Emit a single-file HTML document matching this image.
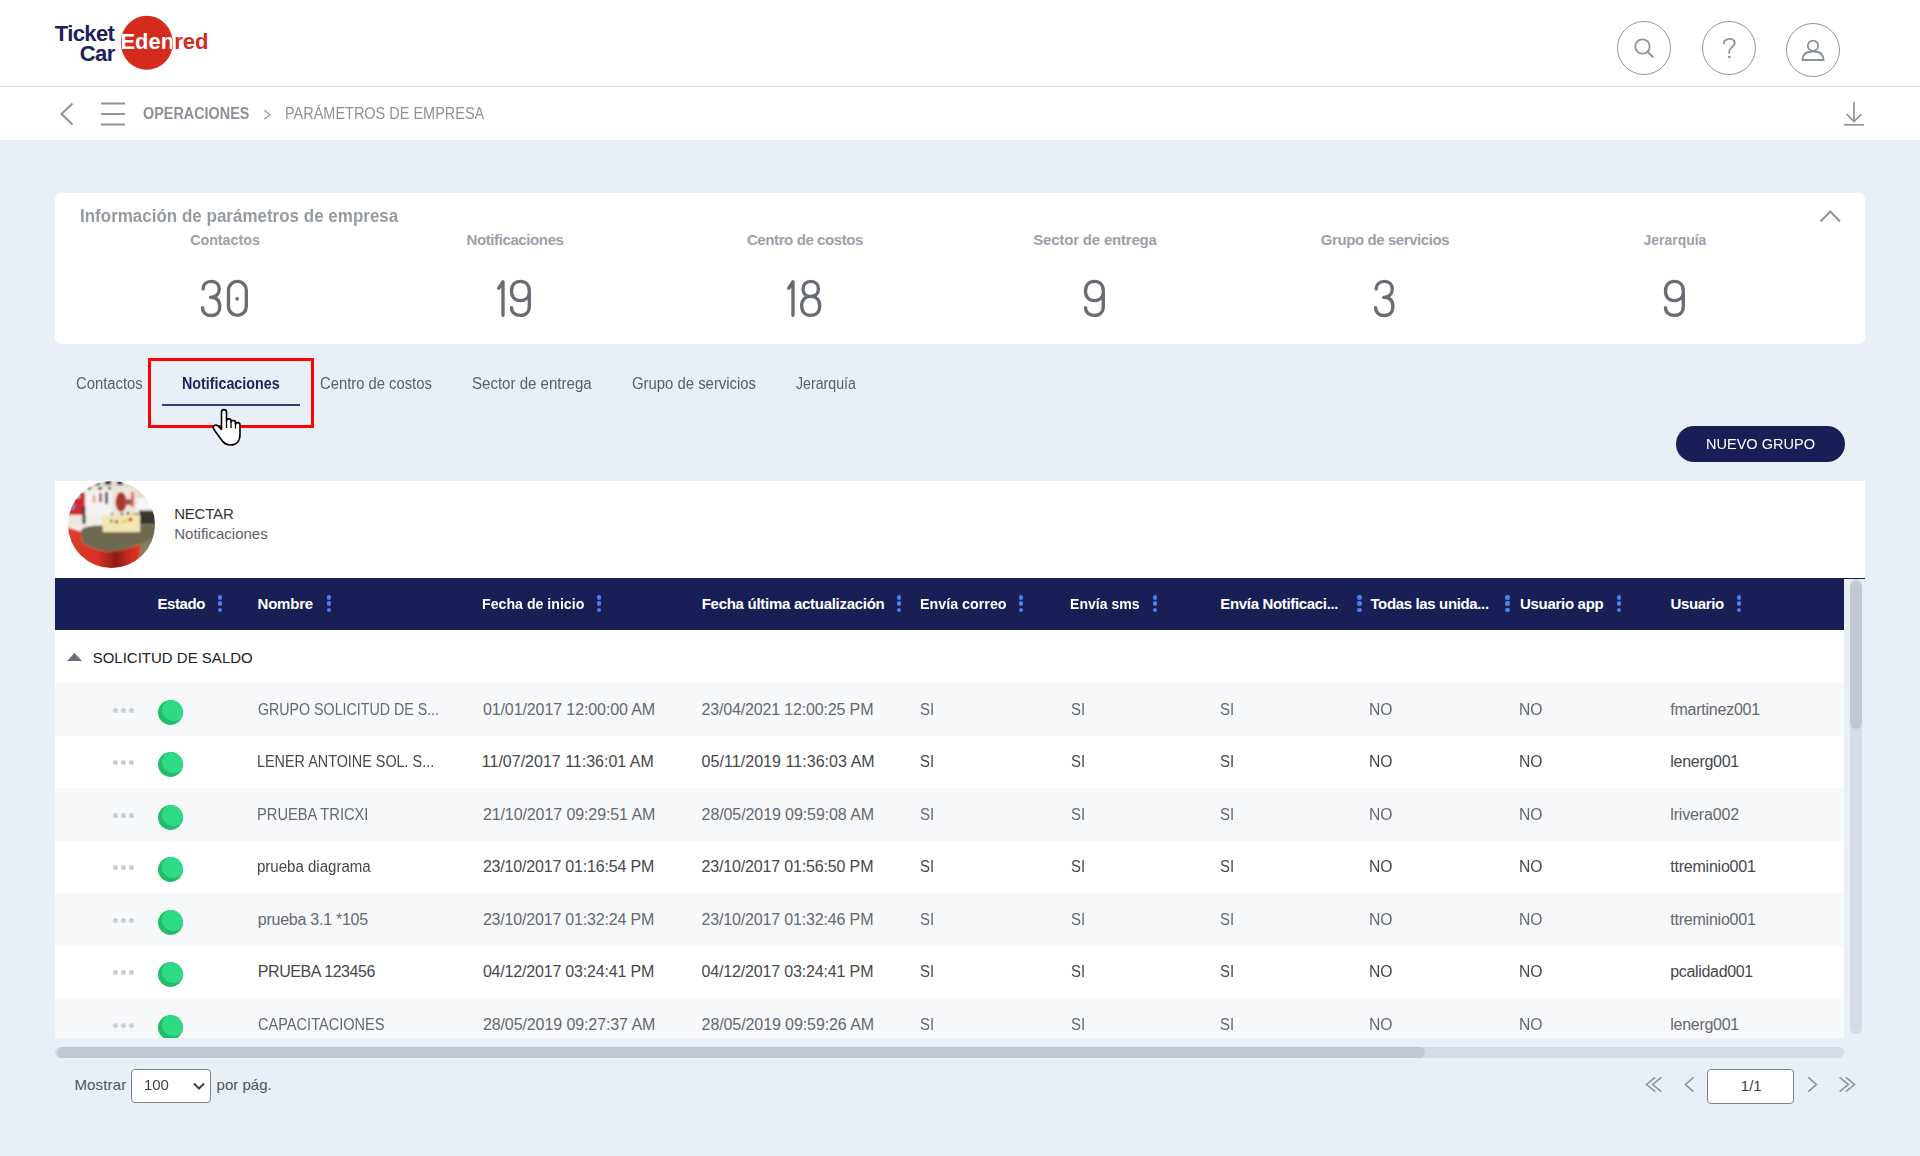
<!DOCTYPE html>
<html><head><meta charset="utf-8">
<style>
*{margin:0;padding:0;box-sizing:border-box}
html,body{width:1920px;height:1156px;overflow:hidden;background:#e9eff7;font-family:"Liberation Sans",sans-serif;position:relative}
.a{position:absolute}
.t{position:absolute;white-space:nowrap;line-height:1}
.circ{position:absolute;width:54px;height:54px;border:1px solid #8e939b;border-radius:50%}
.r{position:absolute;left:55px;width:1789px;height:53px}
.dots{position:absolute;left:113px;width:22px;height:5px}
.dots i{position:absolute;top:0;width:5px;height:5px;border-radius:50%;background:#c9cdd5}
.dots i:nth-child(1){left:0}.dots i:nth-child(2){left:8px}.dots i:nth-child(3){left:16px}
.gc{position:absolute;left:158px;width:25px;height:25px;border-radius:50%;background:#23bd6a;overflow:hidden}
.gc:after{content:"";position:absolute;left:4px;top:-1px;width:23px;height:22px;border-radius:50%;background:#2edb84}
.hd{position:absolute;top:595px;width:5px;height:17px}
.hd i{position:absolute;left:0;width:4.6px;height:4.6px;border-radius:50%;background:#4f80f2}
.hd i:nth-child(1){top:0}.hd i:nth-child(2){top:6.3px}.hd i:nth-child(3){top:12.6px}
</style></head><body>
<div class="a" style="left:0;top:0;width:1920px;height:86px;background:#fff"></div>
<div class="a" style="left:0;top:86px;width:1920px;height:1px;background:#dcdee2"></div>
<div class="a" style="left:0;top:87px;width:1920px;height:53px;background:#fff"></div>

<svg class="a" style="left:50px;top:10px" width="170" height="66" viewBox="50 10 170 66">
  <text x="114.3" y="41.4" text-anchor="end" font-family="Liberation Sans" font-weight="bold" font-size="22" fill="#1b2159" letter-spacing="-0.6">Ticket</text>
  <text x="114.6" y="60.5" text-anchor="end" font-family="Liberation Sans" font-weight="bold" font-size="22" fill="#1b2159" letter-spacing="-0.6">Car</text>
  <defs><clipPath id="cc"><ellipse cx="146.8" cy="42.8" rx="26" ry="27"/></clipPath></defs>
  <ellipse cx="146.8" cy="42.8" rx="26" ry="27" fill="#d52b1e"/>
  <text x="120.4" y="49.4" font-family="Liberation Sans" font-weight="bold" font-size="22" fill="#d52b1e" letter-spacing="0">Edenred</text>
  <text x="120.4" y="49.4" font-family="Liberation Sans" font-weight="bold" font-size="22" fill="#fff" letter-spacing="0" clip-path="url(#cc)">Edenred</text>
</svg>

<div class="circ" style="left:1617px;top:21px"></div>
<div class="circ" style="left:1702px;top:21px"></div>
<div class="circ" style="left:1786px;top:23px"></div>
<svg class="a" style="left:1600px;top:20px" width="260" height="60" viewBox="1600 20 260 60">
  <g fill="none" stroke="#8e939b" stroke-width="1.8" stroke-linecap="round">
    <circle cx="1642.5" cy="46.5" r="7.2"/>
    <line x1="1647.8" y1="52" x2="1653" y2="57"/>
    <path d="M1723.8,43.5 C1723.8,39 1732,37 1734.5,41.5 C1736.5,46 1729.5,47 1729.3,51.5 L1729.3,53"/>
    <circle cx="1813" cy="45.8" r="5.2"/>
    <path d="M1802.5,60 C1802.5,53 1808,51.5 1813,51.5 C1818,51.5 1823.5,53 1823.5,60 Z"/>
  </g>
  <circle cx="1729.3" cy="57" r="1.3" fill="#8e939b"/>
</svg>
<svg class="a" style="left:1835px;top:95px" width="40" height="40" viewBox="1835 95 40 40">
  <g fill="none" stroke="#8e939b" stroke-width="1.7">
    <line x1="1854" y1="102" x2="1854" y2="120.5"/>
    <polyline points="1846.5,114 1854,121.5 1861.5,114"/>
    <line x1="1844" y1="124.8" x2="1864" y2="124.8"/>
  </g>
</svg>

<svg class="a" style="left:55px;top:98px" width="230" height="32" viewBox="55 98 230 32">
  <polyline points="72.5,103.5 61.5,114 72.5,124.5" fill="none" stroke="#8e939b" stroke-width="2"/>
  <line x1="101" y1="103.5" x2="125" y2="103.5" stroke="#8e939b" stroke-width="2"/>
  <line x1="101" y1="114" x2="125" y2="114" stroke="#8e939b" stroke-width="2"/>
  <line x1="101" y1="124.5" x2="125" y2="124.5" stroke="#8e939b" stroke-width="2"/>
  <polyline points="264.3,110.3 269.9,114.8 264.3,119.3" fill="none" stroke="#969ba3" stroke-width="1.3"/>
</svg>

<div class="a" style="left:55px;top:193px;width:1810px;height:151px;background:#fff;border-radius:6px"></div>
<svg class="a" style="left:1815px;top:205px" width="30" height="22" viewBox="1815 205 30 22">
  <polyline points="1820.5,221.5 1830.3,211.5 1840,221.5" fill="none" stroke="#8e939b" stroke-width="2"/>
</svg>
<svg class="a" style="left:180px;top:270px" width="1530" height="55" viewBox="180 270 1530 55"><g fill="none" stroke="#686c75" stroke-width="3.35" stroke-linecap="round" stroke-linejoin="round">
<path transform="translate(200.9,280)" d="M2.2,9 C2.2,4.5 5.5,1.4 10.5,1.4 C15.5,1.4 18.3,4.8 18.3,9.3 C18.3,14 15,17.3 10,17.3 L9.6,17.3 M10,17.3 C16,17.3 18.9,20.5 18.9,26.5 C18.9,32 15.8,35.5 10.5,35.5 C5,35.5 1.6,32.5 1.6,27.6"/>
<path transform="translate(226.9,280)" d="M1.6,10.3 A8.9,8.9 0 0 1 19.4,10.3 L19.4,26.5 A8.9,8.9 0 0 1 1.6,26.5 Z"/>
<path transform="translate(496.1,280)" d="M2.6,8.2 L6.9,1.8 L6.9,35.2"/>
<path transform="translate(510,280)" d="M19.3,11 C19.3,4.8 15.8,1.4 10.4,1.4 C5,1.4 1.5,4.8 1.5,11 C1.5,17.2 5,20.6 10.4,20.6 C15.5,20.6 19.3,17.5 19.3,12 L19.3,26.2 C19.3,32 15.8,35.4 10.4,35.4 C5,35.4 1.5,32.3 1.5,27.6"/>
<path transform="translate(786.1,280)" d="M2.6,8.2 L6.9,1.8 L6.9,35.2"/>
<path transform="translate(800.2,280)" d="M10.5,16.4 C5.5,16.4 2.8,13.5 2.8,9 C2.8,4.3 5.8,1.4 10.5,1.4 C15.2,1.4 18.2,4.3 18.2,9 C18.2,13.5 15.5,16.4 10.5,16.4 C4.8,16.4 1.5,19.8 1.5,26 C1.5,32 5,35.4 10.5,35.4 C16,35.4 19.5,32 19.5,26 C19.5,19.8 16.2,16.4 10.5,16.4 Z"/>
<path transform="translate(1084,280)" d="M19.3,11 C19.3,4.8 15.8,1.4 10.4,1.4 C5,1.4 1.5,4.8 1.5,11 C1.5,17.2 5,20.6 10.4,20.6 C15.5,20.6 19.3,17.5 19.3,12 L19.3,26.2 C19.3,32 15.8,35.4 10.4,35.4 C5,35.4 1.5,32.3 1.5,27.6"/>
<path transform="translate(1374,280)" d="M2.2,9 C2.2,4.5 5.5,1.4 10.5,1.4 C15.5,1.4 18.3,4.8 18.3,9.3 C18.3,14 15,17.3 10,17.3 L9.6,17.3 M10,17.3 C16,17.3 18.9,20.5 18.9,26.5 C18.9,32 15.8,35.5 10.5,35.5 C5,35.5 1.6,32.5 1.6,27.6"/>
<path transform="translate(1664,280)" d="M19.3,11 C19.3,4.8 15.8,1.4 10.4,1.4 C5,1.4 1.5,4.8 1.5,11 C1.5,17.2 5,20.6 10.4,20.6 C15.5,20.6 19.3,17.5 19.3,12 L19.3,26.2 C19.3,32 15.8,35.4 10.4,35.4 C5,35.4 1.5,32.3 1.5,27.6"/>
</g><circle cx="237.1" cy="298.8" r="1.9" fill="#686c75"/></svg>

<div class="a" style="left:162px;top:404px;width:138px;height:2px;background:#353b74"></div>
<div class="a" style="left:148px;top:358px;width:166px;height:70px;border:3px solid #ff0000"></div>

<div class="a" style="left:1676px;top:426px;width:169px;height:36px;border-radius:18px;background:#181e56"></div>

<div class="a" style="left:55px;top:481px;width:1810px;height:97px;background:#fff"></div>
<svg class="a" style="left:67.9px;top:481px" width="87" height="87" viewBox="0 0 87 87">
<defs><clipPath id="av"><circle cx="43.5" cy="43.5" r="43.5"/></clipPath><filter id="bl" x="-10%" y="-10%" width="120%" height="120%"><feGaussianBlur stdDeviation="0.9"/></filter><linearGradient id="rg" x1="0" y1="0" x2="87" y2="0" gradientUnits="userSpaceOnUse"><stop offset="0" stop-color="#e23c2c"/><stop offset="0.35" stop-color="#d63020"/><stop offset="0.55" stop-color="#8e1c14"/><stop offset="0.72" stop-color="#d02c1c"/><stop offset="0.85" stop-color="#e63424"/></linearGradient></defs>
<g clip-path="url(#av)"><g filter="url(#bl)">
<rect x="-5" y="-5" width="97" height="97" fill="#f1eee9"/>
<rect x="-5" y="-5" width="97" height="12" fill="#e4ddd2"/>
<rect x="27" y="-1" width="5" height="5" fill="#3a3a3a"/><rect x="37" y="-1" width="6" height="5" fill="#3a3a3a"/><rect x="49" y="-1" width="6" height="5" fill="#3a3a3a"/>
<rect x="20" y="6" width="3" height="4" fill="#555"/><rect x="30" y="6" width="4" height="4" fill="#555"/><rect x="40" y="6" width="3" height="4" fill="#555"/>
<rect x="66" y="-5" width="25" height="30" fill="#e8dcc8"/>
<polygon points="-5,14 10,11 17,12 17,34 -5,36" fill="#cf2b33"/>
<rect x="2" y="22" width="4" height="6" fill="#3aa0d8"/>
<rect x="8" y="14" width="4" height="3" fill="#9fc8e8"/>
<rect x="-5" y="34" width="20" height="11" fill="#efe6dc"/>
<rect x="14.5" y="25" width="3" height="18" fill="#3a3533"/>
<rect x="17.5" y="9" width="26" height="25" fill="#f4f3f1"/>
<rect x="31" y="12" width="3" height="9" fill="#b84050"/><rect x="37" y="11" width="3" height="12" fill="#3a4a78"/><rect x="25" y="14" width="2" height="8" fill="#c89040"/>
<rect x="44" y="8" width="24" height="28" fill="#ece6da"/>
<ellipse cx="53" cy="21" rx="5.5" ry="10" fill="#a8382c"/>
<rect x="57" y="18" width="6" height="6" fill="#b05048"/>
<rect x="63" y="11" width="3" height="15" fill="#d86060"/>
<rect x="69" y="17" width="18" height="13" fill="#f6f6f4"/>
<rect x="71" y="29.5" width="18" height="14" fill="#383632"/>
<rect x="34.8" y="34" width="37.2" height="17" fill="#f2e6b4"/>
<circle cx="44" cy="33" r="1.3" fill="#40a090"/><circle cx="54" cy="33" r="1.3" fill="#333"/><circle cx="60" cy="32.5" r="1.4" fill="#333"/><circle cx="65" cy="33" r="1.3" fill="#e0b020"/><circle cx="68.5" cy="33" r="1.3" fill="#c83030"/>
<circle cx="43.4" cy="40" r="1.6" fill="#2a9a80"/><circle cx="48.6" cy="40.8" r="1.8" fill="#d03838"/><circle cx="54.7" cy="40.8" r="1.8" fill="#f0d020"/><circle cx="58" cy="40" r="1.5" fill="#e8c820"/><circle cx="62.4" cy="38.5" r="2" fill="#c83030"/>
<path d="M12.7,50.4 C14,46.5 20,44.5 34.8,44.5 L34.8,51 L72,51 L72,43.4 L92,43.4 L92,92 L70,92 C72,80 72,68 72,63.3 C62,67 48,71 37.4,70.3 C28,69 18,65 14,60.7 Z" fill="#6d6a50"/>
<path d="M72,63.3 L92,55 L92,92 L66,92 Z" fill="#8a8058"/>
<path d="M-5,45 L12.7,50.4 L14,60.7 C18,65 28,69 37.4,70.3 C48,71 62,67 72,63.3 C73,72 70,84 66,92 L-5,92 Z" fill="url(#rg)"/>
<circle cx="11.4" cy="66" r="1" fill="#552"/><circle cx="14.9" cy="69" r="1" fill="#552"/>
</g></g></svg>

<div class="a" style="left:55px;top:578px;width:1810px;height:1px;background:#181e56"></div>
<div class="a" style="left:55px;top:578px;width:1789px;height:52px;background:#181e56"></div>
<div class="a" style="left:55px;top:630px;width:1789px;height:53px;background:#fff"></div>
<svg class="a" style="left:60px;top:645px" width="30" height="25" viewBox="60 645 30 25">
  <polygon points="67,661 74.5,653 82,661" fill="#6c7079"/>
</svg>
<div class="a" style="left:0;top:0;width:1844px;height:1038px;overflow:hidden">
<div class="r" style="top:683.0px;background:#f7f8fa"></div>
<div class="dots" style="top:707.6px"><i></i><i></i><i></i></div>
<div class="gc" style="top:700px"></div>
<div class="r" style="top:735.5px;background:#ffffff"></div>
<div class="dots" style="top:759.6px"><i></i><i></i><i></i></div>
<div class="gc" style="top:752px"></div>
<div class="r" style="top:788.0px;background:#f7f8fa"></div>
<div class="dots" style="top:812.6px"><i></i><i></i><i></i></div>
<div class="gc" style="top:805px"></div>
<div class="r" style="top:840.5px;background:#ffffff"></div>
<div class="dots" style="top:864.6px"><i></i><i></i><i></i></div>
<div class="gc" style="top:857px"></div>
<div class="r" style="top:893.0px;background:#f7f8fa"></div>
<div class="dots" style="top:917.6px"><i></i><i></i><i></i></div>
<div class="gc" style="top:910px"></div>
<div class="r" style="top:945.5px;background:#ffffff"></div>
<div class="dots" style="top:969.6px"><i></i><i></i><i></i></div>
<div class="gc" style="top:962px"></div>
<div class="r" style="top:998.0px;background:#f7f8fa"></div>
<div class="dots" style="top:1022.6px"><i></i><i></i><i></i></div>
<div class="gc" style="top:1015px"></div>
</div>
<div class="hd" style="left:217.7px"><i></i><i></i><i></i></div>
<div class="hd" style="left:326.7px"><i></i><i></i><i></i></div>
<div class="hd" style="left:596.7px"><i></i><i></i><i></i></div>
<div class="hd" style="left:896.7px"><i></i><i></i><i></i></div>
<div class="hd" style="left:1018.9px"><i></i><i></i><i></i></div>
<div class="hd" style="left:1152.7px"><i></i><i></i><i></i></div>
<div class="hd" style="left:1357.1px"><i></i><i></i><i></i></div>
<div class="hd" style="left:1505.2px"><i></i><i></i><i></i></div>
<div class="hd" style="left:1616.5px"><i></i><i></i><i></i></div>
<div class="hd" style="left:1736.5px"><i></i><i></i><i></i></div>

<div class="a" style="left:55px;top:1047px;width:1789px;height:11px;border-radius:6px;background:#d5dce6"></div>
<div class="a" style="left:57px;top:1047px;width:1368px;height:11px;border-radius:6px;background:#c2c8d3"></div>
<div class="a" style="left:1850px;top:579px;width:12px;height:455px;border-radius:6px;background:#d5dce6"></div>
<div class="a" style="left:1850px;top:582px;width:12px;height:147px;border-radius:6px;background:#c2c8d3"></div>

<div class="a" style="left:131px;top:1069px;width:80px;height:34px;border:1px solid #7d8189;border-radius:4px;background:#fff"></div>
<svg class="a" style="left:190px;top:1078px" width="18" height="16" viewBox="190 1078 18 16">
  <polyline points="194,1083.5 199,1088.5 204,1083.5" fill="none" stroke="#3d4046" stroke-width="2"/>
</svg>
<div class="a" style="left:1707px;top:1069px;width:86.5px;height:35px;border:1px solid #7d8189;border-radius:4px;background:#fff"></div>
<svg class="a" style="left:1640px;top:1072px" width="225" height="26" viewBox="1640 1072 225 26">
  <g fill="none" stroke="#8e939b" stroke-width="1.6">
    <polyline points="1655.2,1077.4 1646.5,1084.5 1655.2,1091.6"/>
    <polyline points="1661.4,1077.4 1652.7,1084.5 1661.4,1091.6"/>
    <polyline points="1693.5,1077.4 1685.5,1084.5 1693.5,1091.6"/>
    <polyline points="1808.3,1077.4 1816.3,1084.5 1808.3,1091.6"/>
    <polyline points="1839.6,1077.4 1848.3,1084.5 1839.6,1091.6"/>
    <polyline points="1845.8,1077.4 1854.5,1084.5 1845.8,1091.6"/>
  </g>
</svg>
<div class="t" id="t0" style="top:105.23px;font-size:16.5px;color:#8c9199;font-weight:bold;left:143.00px;transform-origin:0 50%;transform:scaleX(0.8722);">OPERACIONES</div>
<div class="t" id="t1" style="top:105.23px;font-size:16.5px;color:#8c9199;left:285.40px;transform-origin:0 50%;transform:scaleX(0.8773);">PARÁMETROS DE EMPRESA</div>
<div class="t" id="t2" style="top:207.16px;font-size:18px;color:#969ba3;font-weight:bold;left:80.40px;transform-origin:0 50%;transform:scaleX(0.9440);">Información de parámetros de empresa</div>
<div class="t" id="t3" style="top:232.10px;font-size:15px;color:#9ca1a9;font-weight:bold;left:225px;transform-origin:0 50%;transform:scaleX(0.9496) translateX(-50%);">Contactos</div>
<div class="t" id="t4" style="top:232.10px;font-size:15px;color:#9ca1a9;font-weight:bold;letter-spacing:-0.385px;left:515px;transform-origin:0 50%;transform:scaleX(1.0000) translateX(-50%);padding-left:-0.385px;">Notificaciones</div>
<div class="t" id="t5" style="top:232.10px;font-size:15px;color:#9ca1a9;font-weight:bold;letter-spacing:-0.400px;left:805px;transform-origin:0 50%;transform:scaleX(1.0000) translateX(-50%);padding-left:-0.400px;">Centro de costos</div>
<div class="t" id="t6" style="top:232.10px;font-size:15px;color:#9ca1a9;font-weight:bold;letter-spacing:-0.189px;left:1095px;transform-origin:0 50%;transform:scaleX(1.0000) translateX(-50%);padding-left:-0.189px;">Sector de entrega</div>
<div class="t" id="t7" style="top:232.10px;font-size:15px;color:#9ca1a9;font-weight:bold;letter-spacing:-0.412px;left:1385px;transform-origin:0 50%;transform:scaleX(1.0000) translateX(-50%);padding-left:-0.412px;">Grupo de servicios</div>
<div class="t" id="t8" style="top:232.10px;font-size:15px;color:#9ca1a9;font-weight:bold;left:1675px;transform-origin:0 50%;transform:scaleX(0.9291) translateX(-50%);">Jerarquía</div>
<div class="t" id="t9" style="top:376.46px;font-size:16px;color:#5a5e66;left:75.60px;transform-origin:0 50%;transform:scaleX(0.9250);">Contactos</div>
<div class="t" id="t10" style="top:376.46px;font-size:16px;color:#1b2159;font-weight:bold;left:182.00px;transform-origin:0 50%;transform:scaleX(0.8925);">Notificaciones</div>
<div class="t" id="t11" style="top:376.46px;font-size:16px;color:#5a5e66;left:320.40px;transform-origin:0 50%;transform:scaleX(0.9247);">Centro de costos</div>
<div class="t" id="t12" style="top:376.46px;font-size:16px;color:#5a5e66;left:472.30px;transform-origin:0 50%;transform:scaleX(0.9408);">Sector de entrega</div>
<div class="t" id="t13" style="top:376.46px;font-size:16px;color:#5a5e66;left:632.00px;transform-origin:0 50%;transform:scaleX(0.9300);">Grupo de servicios</div>
<div class="t" id="t14" style="top:376.46px;font-size:16px;color:#5a5e66;left:796.00px;transform-origin:0 50%;transform:scaleX(0.8852);">Jerarquía</div>
<div class="t" id="t15" style="top:436.30px;font-size:15px;color:#ffffff;left:1705.60px;transform-origin:0 50%;transform:scaleX(0.9684);">NUEVO GRUPO</div>
<div class="t" id="t16" style="top:506.40px;font-size:15px;color:#333333;letter-spacing:-0.200px;left:174.20px;">NECTAR</div>
<div class="t" id="t17" style="top:525.60px;font-size:15px;color:#5d6067;letter-spacing:0.012px;left:174.20px;">Notificaciones</div>
<div class="t" id="t18" style="top:596.30px;font-size:15px;color:#ffffff;font-weight:bold;letter-spacing:-0.400px;left:157.40px;">Estado</div>
<div class="t" id="t19" style="top:596.30px;font-size:15px;color:#ffffff;font-weight:bold;letter-spacing:-0.200px;left:257.50px;">Nombre</div>
<div class="t" id="t20" style="top:596.30px;font-size:15px;color:#ffffff;font-weight:bold;left:481.80px;transform-origin:0 50%;transform:scaleX(0.9444);">Fecha de inicio</div>
<div class="t" id="t21" style="top:596.30px;font-size:15px;color:#ffffff;font-weight:bold;letter-spacing:-0.280px;left:701.70px;">Fecha última actualización</div>
<div class="t" id="t22" style="top:596.30px;font-size:15px;color:#ffffff;font-weight:bold;left:920.40px;transform-origin:0 50%;transform:scaleX(0.9529);">Envía correo</div>
<div class="t" id="t23" style="top:596.30px;font-size:15px;color:#ffffff;font-weight:bold;left:1070.40px;transform-origin:0 50%;transform:scaleX(0.9377);">Envía sms</div>
<div class="t" id="t24" style="top:596.30px;font-size:15px;color:#ffffff;font-weight:bold;letter-spacing:-0.333px;left:1220.30px;">Envía Notificaci...</div>
<div class="t" id="t25" style="top:596.30px;font-size:15px;color:#ffffff;font-weight:bold;letter-spacing:-0.356px;left:1370.40px;">Todas las unida...</div>
<div class="t" id="t26" style="top:596.30px;font-size:15px;color:#ffffff;font-weight:bold;letter-spacing:-0.300px;left:1520.00px;">Usuario app</div>
<div class="t" id="t27" style="top:596.30px;font-size:15px;color:#ffffff;font-weight:bold;letter-spacing:-0.342px;left:1670.40px;">Usuario</div>
<div class="t" id="t28" style="top:650.30px;font-size:15px;color:#222222;left:92.70px;">SOLICITUD DE SALDO</div>
<div class="t" id="t29" style="top:701.66px;font-size:16px;color:#65686e;left:257.80px;transform-origin:0 50%;transform:scaleX(0.8891);">GRUPO SOLICITUD DE S...</div>
<div class="t" id="t30" style="top:701.66px;font-size:16px;color:#65686e;letter-spacing:-0.098px;left:482.90px;">01/01/2017 12:00:00 AM</div>
<div class="t" id="t31" style="top:701.66px;font-size:16px;color:#65686e;letter-spacing:-0.161px;left:701.60px;">23/04/2021 12:00:25 PM</div>
<div class="t" id="t32" style="top:701.66px;font-size:16px;color:#65686e;left:920.30px;transform-origin:0 50%;transform:scaleX(0.9331);">SI</div>
<div class="t" id="t33" style="top:701.66px;font-size:16px;color:#65686e;left:1070.60px;transform-origin:0 50%;transform:scaleX(0.9331);">SI</div>
<div class="t" id="t34" style="top:701.66px;font-size:16px;color:#65686e;left:1220.30px;transform-origin:0 50%;transform:scaleX(0.9331);">SI</div>
<div class="t" id="t35" style="top:701.66px;font-size:16px;color:#65686e;left:1369.00px;transform-origin:0 50%;transform:scaleX(0.9818);">NO</div>
<div class="t" id="t36" style="top:701.66px;font-size:16px;color:#65686e;left:1519.00px;transform-origin:0 50%;transform:scaleX(0.9818);">NO</div>
<div class="t" id="t37" style="top:701.66px;font-size:16px;color:#65686e;letter-spacing:-0.245px;left:1670.30px;">fmartinez001</div>
<div class="t" id="t38" style="top:754.16px;font-size:16px;color:#46484d;left:256.60px;transform-origin:0 50%;transform:scaleX(0.8989);">LENER ANTOINE SOL. S...</div>
<div class="t" id="t39" style="top:754.16px;font-size:16px;color:#46484d;letter-spacing:0.002px;left:481.80px;">11/07/2017 11:36:01 AM</div>
<div class="t" id="t40" style="top:754.16px;font-size:16px;color:#46484d;letter-spacing:0.052px;left:701.60px;">05/11/2019 11:36:03 AM</div>
<div class="t" id="t41" style="top:754.16px;font-size:16px;color:#46484d;left:920.30px;transform-origin:0 50%;transform:scaleX(0.9331);">SI</div>
<div class="t" id="t42" style="top:754.16px;font-size:16px;color:#46484d;left:1070.60px;transform-origin:0 50%;transform:scaleX(0.9331);">SI</div>
<div class="t" id="t43" style="top:754.16px;font-size:16px;color:#46484d;left:1220.30px;transform-origin:0 50%;transform:scaleX(0.9331);">SI</div>
<div class="t" id="t44" style="top:754.16px;font-size:16px;color:#46484d;left:1369.00px;transform-origin:0 50%;transform:scaleX(0.9819);">NO</div>
<div class="t" id="t45" style="top:754.16px;font-size:16px;color:#46484d;left:1519.00px;transform-origin:0 50%;transform:scaleX(0.9819);">NO</div>
<div class="t" id="t46" style="top:754.16px;font-size:16px;color:#46484d;letter-spacing:-0.291px;left:1670.30px;">lenerg001</div>
<div class="t" id="t47" style="top:806.66px;font-size:16px;color:#65686e;left:256.60px;transform-origin:0 50%;transform:scaleX(0.9168);">PRUEBA TRICXI</div>
<div class="t" id="t48" style="top:806.66px;font-size:16px;color:#65686e;letter-spacing:-0.094px;left:482.90px;">21/10/2017 09:29:51 AM</div>
<div class="t" id="t49" style="top:806.66px;font-size:16px;color:#65686e;letter-spacing:-0.091px;left:701.60px;">28/05/2019 09:59:08 AM</div>
<div class="t" id="t50" style="top:806.66px;font-size:16px;color:#65686e;left:920.30px;transform-origin:0 50%;transform:scaleX(0.9331);">SI</div>
<div class="t" id="t51" style="top:806.66px;font-size:16px;color:#65686e;left:1070.60px;transform-origin:0 50%;transform:scaleX(0.9331);">SI</div>
<div class="t" id="t52" style="top:806.66px;font-size:16px;color:#65686e;left:1220.30px;transform-origin:0 50%;transform:scaleX(0.9331);">SI</div>
<div class="t" id="t53" style="top:806.66px;font-size:16px;color:#65686e;left:1369.00px;transform-origin:0 50%;transform:scaleX(0.9818);">NO</div>
<div class="t" id="t54" style="top:806.66px;font-size:16px;color:#65686e;left:1519.00px;transform-origin:0 50%;transform:scaleX(0.9818);">NO</div>
<div class="t" id="t55" style="top:806.66px;font-size:16px;color:#65686e;letter-spacing:-0.164px;left:1670.30px;">lrivera002</div>
<div class="t" id="t56" style="top:859.16px;font-size:16px;color:#46484d;left:256.60px;transform-origin:0 50%;transform:scaleX(0.9400);">prueba diagrama</div>
<div class="t" id="t57" style="top:859.16px;font-size:16px;color:#46484d;letter-spacing:-0.187px;left:482.90px;">23/10/2017 01:16:54 PM</div>
<div class="t" id="t58" style="top:859.16px;font-size:16px;color:#46484d;letter-spacing:-0.161px;left:701.60px;">23/10/2017 01:56:50 PM</div>
<div class="t" id="t59" style="top:859.16px;font-size:16px;color:#46484d;left:920.30px;transform-origin:0 50%;transform:scaleX(0.9331);">SI</div>
<div class="t" id="t60" style="top:859.16px;font-size:16px;color:#46484d;left:1070.60px;transform-origin:0 50%;transform:scaleX(0.9331);">SI</div>
<div class="t" id="t61" style="top:859.16px;font-size:16px;color:#46484d;left:1220.30px;transform-origin:0 50%;transform:scaleX(0.9331);">SI</div>
<div class="t" id="t62" style="top:859.16px;font-size:16px;color:#46484d;left:1369.00px;transform-origin:0 50%;transform:scaleX(0.9819);">NO</div>
<div class="t" id="t63" style="top:859.16px;font-size:16px;color:#46484d;left:1519.00px;transform-origin:0 50%;transform:scaleX(0.9819);">NO</div>
<div class="t" id="t64" style="top:859.16px;font-size:16px;color:#46484d;letter-spacing:-0.230px;left:1670.30px;">ttreminio001</div>
<div class="t" id="t65" style="top:911.66px;font-size:16px;color:#65686e;letter-spacing:-0.253px;left:257.80px;">prueba 3.1 *105</div>
<div class="t" id="t66" style="top:911.66px;font-size:16px;color:#65686e;letter-spacing:-0.187px;left:482.90px;">23/10/2017 01:32:24 PM</div>
<div class="t" id="t67" style="top:911.66px;font-size:16px;color:#65686e;letter-spacing:-0.161px;left:701.60px;">23/10/2017 01:32:46 PM</div>
<div class="t" id="t68" style="top:911.66px;font-size:16px;color:#65686e;left:920.30px;transform-origin:0 50%;transform:scaleX(0.9331);">SI</div>
<div class="t" id="t69" style="top:911.66px;font-size:16px;color:#65686e;left:1070.60px;transform-origin:0 50%;transform:scaleX(0.9331);">SI</div>
<div class="t" id="t70" style="top:911.66px;font-size:16px;color:#65686e;left:1220.30px;transform-origin:0 50%;transform:scaleX(0.9331);">SI</div>
<div class="t" id="t71" style="top:911.66px;font-size:16px;color:#65686e;left:1369.00px;transform-origin:0 50%;transform:scaleX(0.9818);">NO</div>
<div class="t" id="t72" style="top:911.66px;font-size:16px;color:#65686e;left:1519.00px;transform-origin:0 50%;transform:scaleX(0.9818);">NO</div>
<div class="t" id="t73" style="top:911.66px;font-size:16px;color:#65686e;letter-spacing:-0.230px;left:1670.30px;">ttreminio001</div>
<div class="t" id="t74" style="top:964.16px;font-size:16px;color:#46484d;letter-spacing:-0.427px;left:257.80px;">PRUEBA 123456</div>
<div class="t" id="t75" style="top:964.16px;font-size:16px;color:#46484d;letter-spacing:-0.187px;left:482.90px;">04/12/2017 03:24:41 PM</div>
<div class="t" id="t76" style="top:964.16px;font-size:16px;color:#46484d;letter-spacing:-0.161px;left:701.60px;">04/12/2017 03:24:41 PM</div>
<div class="t" id="t77" style="top:964.16px;font-size:16px;color:#46484d;left:920.30px;transform-origin:0 50%;transform:scaleX(0.9331);">SI</div>
<div class="t" id="t78" style="top:964.16px;font-size:16px;color:#46484d;left:1070.60px;transform-origin:0 50%;transform:scaleX(0.9331);">SI</div>
<div class="t" id="t79" style="top:964.16px;font-size:16px;color:#46484d;left:1220.30px;transform-origin:0 50%;transform:scaleX(0.9331);">SI</div>
<div class="t" id="t80" style="top:964.16px;font-size:16px;color:#46484d;left:1369.00px;transform-origin:0 50%;transform:scaleX(0.9819);">NO</div>
<div class="t" id="t81" style="top:964.16px;font-size:16px;color:#46484d;left:1519.00px;transform-origin:0 50%;transform:scaleX(0.9819);">NO</div>
<div class="t" id="t82" style="top:964.16px;font-size:16px;color:#46484d;letter-spacing:-0.337px;left:1670.30px;">pcalidad001</div>
<div class="t" id="t83" style="top:1016.66px;font-size:16px;color:#65686e;left:257.80px;transform-origin:0 50%;transform:scaleX(0.9104);">CAPACITACIONES</div>
<div class="t" id="t84" style="top:1016.66px;font-size:16px;color:#65686e;letter-spacing:-0.094px;left:482.90px;">28/05/2019 09:27:37 AM</div>
<div class="t" id="t85" style="top:1016.66px;font-size:16px;color:#65686e;letter-spacing:-0.091px;left:701.60px;">28/05/2019 09:59:26 AM</div>
<div class="t" id="t86" style="top:1016.66px;font-size:16px;color:#65686e;left:920.30px;transform-origin:0 50%;transform:scaleX(0.9331);">SI</div>
<div class="t" id="t87" style="top:1016.66px;font-size:16px;color:#65686e;left:1070.60px;transform-origin:0 50%;transform:scaleX(0.9331);">SI</div>
<div class="t" id="t88" style="top:1016.66px;font-size:16px;color:#65686e;left:1220.30px;transform-origin:0 50%;transform:scaleX(0.9331);">SI</div>
<div class="t" id="t89" style="top:1016.66px;font-size:16px;color:#65686e;left:1369.00px;transform-origin:0 50%;transform:scaleX(0.9818);">NO</div>
<div class="t" id="t90" style="top:1016.66px;font-size:16px;color:#65686e;left:1519.00px;transform-origin:0 50%;transform:scaleX(0.9818);">NO</div>
<div class="t" id="t91" style="top:1016.66px;font-size:16px;color:#65686e;letter-spacing:-0.291px;left:1670.30px;">lenerg001</div>
<div class="t" id="t92" style="top:1077.30px;font-size:15px;color:#4f5359;letter-spacing:0.160px;left:74.40px;">Mostrar</div>
<div class="t" id="t93" style="top:1077.30px;font-size:15px;color:#3d4046;left:144.40px;transform-origin:0 50%;transform:scaleX(0.9959);">100</div>
<div class="t" id="t94" style="top:1077.30px;font-size:15px;color:#4f5359;left:216.60px;">por pág.</div>
<div class="t" id="t95" style="top:1077.80px;font-size:15px;color:#3d4046;left:1740.80px;">1/1</div>
<svg class="a" style="left:208px;top:404px" width="40" height="44" viewBox="-4 -4 40 44">
<path d="M9.5,4 C9.5,0.8 14.5,0.8 14.5,4 L14.5,12.5 C15,10.3 19,10.3 19,12.8 L19,14 C19.5,12 23.5,12 23.5,14.5 L23.5,16 C24,14 28,14 28,16.8 L28,26.5 C28,33 24.5,37 18.5,37 C13.5,37 11.2,34.5 9.2,31.5 L1.8,21.2 C0,18.6 3.2,15.6 5.8,17.8 L9.5,21.5 Z" fill="#fff" stroke="#000" stroke-width="1.6" stroke-linejoin="round"/>
<path d="M14.5,12.5 L14.5,20 M19,14 L19,20 M23.5,16 L23.5,20.5" stroke="#000" stroke-width="1.3"/>
</svg>
</body></html>
